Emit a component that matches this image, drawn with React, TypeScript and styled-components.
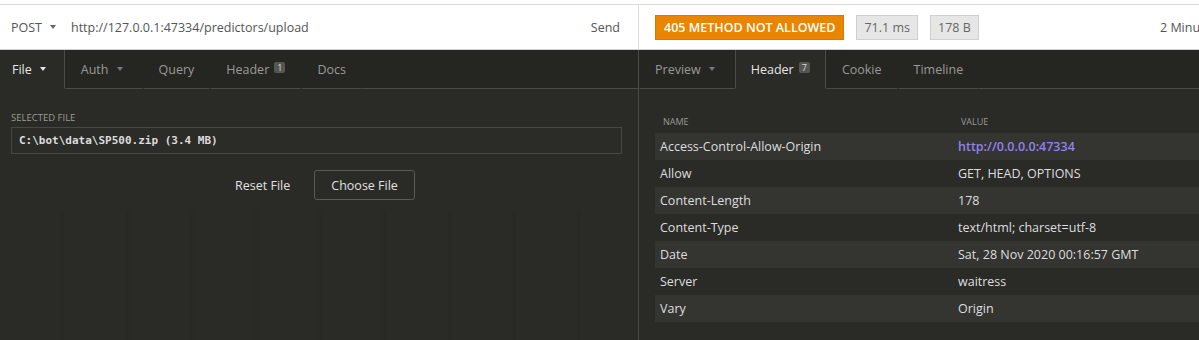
import React from "react";
import styled, {createGlobalStyle} from "styled-components";

const GlobalStyle = createGlobalStyle`
  html, body {
    margin: 0;
    padding: 0;
    background: #2a2a27;
  }
  body {
    font-family: "Open Sans", "Noto Sans", sans-serif;
    font-size: 12px;
  }
  * {
    box-sizing: border-box;
  }
`;

const Page = styled.div`
  display: flex;
  width: 1199px;
  height: 340px;
  overflow: hidden;
`;

const Pane = styled.section<{ $width?: number }>`
  display: flex;
  flex-direction: column;
  width: ${(p) => (p.$width ? `${p.$width}px` : "auto")};
  flex: ${(p) => (p.$width ? "none" : "1")};
  min-width: 0;
  border-right: ${(p) => (p.$width ? "1px solid #4a4a47" : "none")};
`;

const TopStrip = styled.div`
  height: 5px;
  background: #fff;
  border-bottom: 1px solid #d9d9d9;
  margin-right: -1px;
`;

const UrlBar = styled.div`
  display: flex;
  align-items: center;
  height: 45px;
  background: #fff;
  border-bottom: 1px solid #d0d0d0;
  margin-right: -1px;
  border-right: 1px solid #dcdcdc;
  padding: 0 18px 0 11px;
  color: #555;
  font-size: 12.5px;
  white-space: nowrap;
`;

const ResponseBar = styled(UrlBar)`
  padding: 0 0 0 16px;
  border-right: none;
  margin-right: 0;
  gap: 12px;
  overflow: hidden;
`;

const Method = styled.span`
  display: flex;
  align-items: center;
  gap: 8px;
  margin-right: 15px;
`;

const Caret = styled.span<{ $color?: string }>`
  display: inline-block;
  width: 0;
  height: 0;
  border-left: 3.5px solid transparent;
  border-right: 3.5px solid transparent;
  border-top: 4px solid ${(p) => p.$color || "#666"};
`;

const Url = styled.span`
  flex: 1;
`;

const Send = styled.span`
  color: #555;
`;

const StatusBadge = styled.span`
  display: inline-flex;
  align-items: center;
  height: 25px;
  padding: 0 8px;
  background: #ea8500;
  border: 1px solid #d97a00;
  color: #fff;
  font-weight: 600;
  font-size: 12.5px;
`;

const MetaBadge = styled.span`
  display: inline-flex;
  align-items: center;
  height: 25px;
  padding: 0 7px;
  background: #e6e6e6;
  border: 1px solid #cfcfcf;
  color: #666;
  font-size: 12.5px;
`;

const TimeAgo = styled.span`
  margin-left: auto;
  margin-right: -44px;
  color: #555;
`;

const TabBar = styled.div`
  display: flex;
  height: 39px;
  background: #252522;
`;

const Tab = styled.div<{ $active?: boolean; $first?: boolean; $menu?: boolean }>`
  display: flex;
  align-items: center;
  gap: 8px;
  height: 100%;
  padding: ${(p) => (p.$first ? "0 18px 0 11px" : p.$menu ? "0 19px 0 15px" : "0 15px")};
  color: ${(p) => (p.$active ? "#e6e6e6" : "#9a9a97")};
  font-size: 12.5px;
  background: ${(p) => (p.$active ? "#2a2a27" : "transparent")};
  border-bottom: 1px solid ${(p) => (p.$active ? "transparent" : "#4a4a47")};
  border-right: 1px solid ${(p) => (p.$active ? "#4a4a47" : "transparent")};
  border-left: 1px solid ${(p) => (p.$active && !p.$first ? "#4a4a47" : "transparent")};
`;

const TabFill = styled.div`
  flex: 1;
  border-bottom: 1px solid #4a4a47;
`;

const Count = styled.sup`
  display: inline-block;
  margin-left: -3px;
  padding: 0 3px;
  min-width: 11px;
  height: 11px;
  line-height: 11px;
  font-size: 9px;
  text-align: center;
  background: #555552;
  color: #ddd;
  border-radius: 2px;
  align-self: flex-start;
  margin-top: 12px;
`;

const Body = styled.div`
  display: flex;
  flex-direction: column;
  flex: 1;
  padding: 22px 16px 0 11px;
`;

const Label = styled.div`
  color: #9a9a97;
  font-size: 9.5px;
  text-transform: uppercase;
  margin-bottom: 3px;
`;

const FileInput = styled.div`
  height: 27px;
  display: flex;
  align-items: center;
  padding: 0 7px;
  border: 1px solid #474744;
  background: #2b2b28;
  color: #dcdcdc;
  font-family: "DejaVu Sans Mono", "Liberation Mono", monospace;
  font-size: 11px;
  font-weight: bold;
`;

const ButtonRow = styled.div`
  display: flex;
  justify-content: center;
  gap: 7px;
  margin-top: 16px;
`;

const Button = styled.button<{ $outlined?: boolean }>`
  height: 30px;
  padding: 0 16px;
  font-family: inherit;
  font-size: 12.5px;
  color: #e0e0e0;
  background: transparent;
  border: 1px solid ${(p) => (p.$outlined ? "#5a5a57" : "transparent")};
  border-radius: 3px;
`;

const Stripes = styled.div`
  flex: 1;
  margin: 10px -16px 0 -11px;
  background-image: linear-gradient(
    to right,
    transparent 0,
    transparent 61px,
    rgba(0, 0, 0, 0.045) 61px,
    rgba(0, 0, 0, 0.045) 67px,
    transparent 67px
  );
  background-size: 64.5px 100%;
`;

const TableWrap = styled.div`
  padding: 20px 0 0 16px;
`;

const Table = styled.table`
  width: 560px;
  border-collapse: collapse;
  table-layout: fixed;
`;

const Th = styled.th`
  text-align: left;
  font-weight: normal;
  font-size: 9px;
  text-transform: uppercase;
  color: #9a9a97;
  height: 24px;
  padding: 0 0 0 8px;
`;

const Row = styled.tr<{ $striped?: boolean }>`
  background: ${(p) => (p.$striped ? "#343431" : "transparent")};
`;

const Td = styled.td<{ $link?: boolean }>`
  height: 27px;
  padding: 0 5px;
  font-size: 12.5px;
  color: ${(p) => (p.$link ? "#9282ec" : "#dedede")};
  font-weight: ${(p) => (p.$link ? 600 : "normal")};
  white-space: nowrap;
`;

const headers: [string, string][] = [
    ["Access-Control-Allow-Origin", "http://0.0.0.0:47334"],
    ["Allow", "GET, HEAD, OPTIONS"],
    ["Content-Length", "178"],
    ["Content-Type", "text/html; charset=utf-8"],
    ["Date", "Sat, 28 Nov 2020 00:16:57 GMT"],
    ["Server", "waitress"],
    ["Vary", "Origin"],
];

const App = () => {
    return (
        <>
            <GlobalStyle />
            <Page>
                <Pane $width={639}>
                    <TopStrip />
                    <UrlBar>
                        <Method>
                            POST <Caret />
                        </Method>
                        <Url>http://127.0.0.1:47334/predictors/upload</Url>
                        <Send>Send</Send>
                    </UrlBar>
                    <TabBar>
                        <Tab $active $first>
                            File <Caret $color="#e6e6e6" />
                        </Tab>
                        <Tab $menu>
                            Auth <Caret $color="#777" />
                        </Tab>
                        <Tab>Query</Tab>
                        <Tab>
                            Header <Count>1</Count>
                        </Tab>
                        <Tab>Docs</Tab>
                        <TabFill />
                    </TabBar>
                    <Body>
                        <Label>Selected File</Label>
                        <FileInput>C:\bot\data\SP500.zip (3.4 MB)</FileInput>
                        <ButtonRow>
                            <Button>Reset File</Button>
                            <Button $outlined>Choose File</Button>
                        </ButtonRow>
                        <Stripes />
                    </Body>
                </Pane>
                <Pane>
                    <TopStrip />
                    <ResponseBar>
                        <StatusBadge>405 METHOD NOT ALLOWED</StatusBadge>
                        <MetaBadge>71.1 ms</MetaBadge>
                        <MetaBadge>178 B</MetaBadge>
                        <TimeAgo>2 Minutes Ago</TimeAgo>
                    </ResponseBar>
                    <TabBar>
                        <Tab $menu>
                            Preview <Caret $color="#777" />
                        </Tab>
                        <Tab $active>
                            Header <Count>7</Count>
                        </Tab>
                        <Tab>Cookie</Tab>
                        <Tab>Timeline</Tab>
                        <TabFill />
                    </TabBar>
                    <TableWrap>
                        <Table>
                            <colgroup>
                                <col style={{width: 298}} />
                                <col />
                            </colgroup>
                            <thead>
                                <tr>
                                    <Th>Name</Th>
                                    <Th>Value</Th>
                                </tr>
                            </thead>
                            <tbody>
                                {headers.map(([name, value], i) => (
                                    <Row key={name} $striped={i % 2 === 0}>
                                        <Td>{name}</Td>
                                        <Td $link={i === 0}>{value}</Td>
                                    </Row>
                                ))}
                            </tbody>
                        </Table>
                    </TableWrap>
                </Pane>
            </Page>
        </>
    );
};

export default App;
